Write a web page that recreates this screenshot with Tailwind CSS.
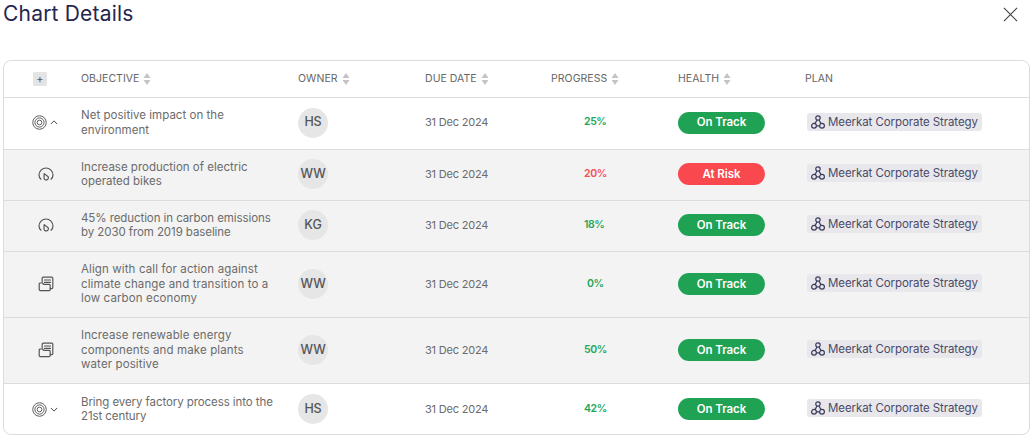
<!doctype html>
<html><head><meta charset="utf-8"><script src="https://cdn.jsdelivr.net/npm/@tailwindcss/browser@4"></script></head>
<body class="bg-white w-[1032px] h-[437px] overflow-hidden font-['Inter','Noto_Sans',sans-serif] text-[#6b6b6b]">
<svg width="0" height="0" class="absolute">
<defs>
<symbol id="target" viewBox="0 0 16 16"><g fill="none" stroke="#555" stroke-width="1"><circle cx="8" cy="8" r="7.2"/><circle cx="8" cy="8" r="4.9"/><circle cx="8" cy="8" r="2.5"/></g></symbol>
<symbol id="gauge" viewBox="0 0 16 16"><g fill="none" stroke="#555" stroke-width="1.2" stroke-linecap="round" stroke-linejoin="round"><path d="M3 13.2C1.6 12 1 10.5 1 9a7 7 0 0 1 14 0c0 1.5-.6 3-2 4.2"/><path d="M6.2 7.6l4 3.2a2.2 2.2 0 1 1-4.2.9z"/></g></symbol>
<symbol id="doc" viewBox="0 0 16 16"><g fill="none" stroke="#555" stroke-width="1.2" stroke-linejoin="round" stroke-linecap="round"><path d="M4.2 6V2.2a1 1 0 0 1 1-1h8.6a1 1 0 0 1 1 1v9.4a1 1 0 0 1-1 1h-1.6"/><path d="M6.5 4h6M6.5 6.4h6"/><path d="M1.2 8a1 1 0 0 1 1-1h2.3l1.2 1.4h5.5a1 1 0 0 1 1 1v4.2a1 1 0 0 1-1 1H2.2a1 1 0 0 1-1-1z"/></g></symbol>
<symbol id="plan" viewBox="0 0 14 14"><g fill="none" stroke="#3a3a5c" stroke-width="1.2"><circle cx="7" cy="3" r="2.2"/><circle cx="3" cy="10.8" r="2.4"/><circle cx="11" cy="10.8" r="2.4"/><path d="M6 5L4 8.6M8 5l2 3.6M5.4 10.8h3.2"/></g></symbol>
<symbol id="sort" viewBox="0 0 8 14"><path d="M4 1L7.5 6H.5z" fill="#c4c4c8"/><path d="M4 13L.5 8h7z" fill="#c4c4c8"/></symbol>
</defs></svg>

<div class="flex justify-between h-[60px] pl-[3px] pr-[14px]">
  <h1 class="text-[21px] leading-[28px] tracking-[0.2px] text-[#25254f] font-normal">Chart Details</h1>
  <svg class="w-[15px] h-[15px] mt-[7px]" viewBox="0 0 16 16"><path d="M1 1l14 14M15 1L1 15" stroke="#444" stroke-width="1.2" fill="none"/></svg>
</div>

<div class="mx-[3px] w-[1027px] h-[375px] border border-[#dcdcdc] rounded-[8px] overflow-hidden text-[11.5px] leading-[14.5px] tracking-[-0.08px]">
  <div class="grid grid-cols-[77px_217px_127px_126px_127px_127px_1fr] items-center h-[37px] border-b border-[#dcdcdc] text-[10.5px] text-[#666] tracking-[0.05px]">
    <div class="pl-[29px]"><span class="w-[14px] h-[14px] bg-[#e4e4e4] flex items-center justify-center text-[11px] leading-none text-[#555] rounded-[1px]">+</span></div>
    <div class="flex items-center gap-[4px]">OBJECTIVE <svg class="w-[8px] h-[14px]"><use href="#sort"/></svg></div>
    <div class="flex items-center gap-[4px]">OWNER <svg class="w-[8px] h-[14px]"><use href="#sort"/></svg></div>
    <div class="flex items-center gap-[4px]">DUE DATE <svg class="w-[8px] h-[14px]"><use href="#sort"/></svg></div>
    <div class="flex items-center gap-[4px]">PROGRESS <svg class="w-[8px] h-[14px]"><use href="#sort"/></svg></div>
    <div class="flex items-center gap-[4px]">HEALTH <svg class="w-[8px] h-[14px]"><use href="#sort"/></svg></div>
    <div>PLAN</div>
  </div>

  <div class="grid grid-cols-[77px_217px_127px_126px_127px_127px_1fr] items-center h-[52px] pb-[2px] border-b border-[#dcdcdc]">
    <div class="flex items-center justify-center gap-[3px] pl-[4px]"><svg class="w-[15px] h-[15px]"><use href="#target"/></svg><svg class="w-[8px] h-[5px]" viewBox="0 0 10 6"><path d="M1 5l4-4 4 4" fill="none" stroke="#444" stroke-width="1.2"/></svg></div>
    <div class="pr-[20px] tracking-[0.03px]">Net positive impact on the environment</div>
    <div><span class="w-[30px] h-[30px] rounded-full bg-[#e6e6e6] flex items-center justify-center text-[12.5px] font-medium text-[#555]">HS</span></div>
    <div class="text-[11px] tracking-[-0.2px]">31 Dec 2024</div>
    <div class="pl-[33px] text-[10.5px] tracking-[-0.4px] font-semibold text-[#22a75a]">25%</div>
    <div><span class="flex items-center justify-center w-[87px] h-[22px] rounded-full bg-[#1fa254] text-white font-semibold">On Track</span></div>
    <div><span class="inline-flex items-center gap-[3px] h-[18px] pl-[4px] pr-[4px] ml-[2px] bg-[#e8e8ec] rounded-[3px] text-[#4a4a68] whitespace-nowrap"><svg class="w-[14px] h-[14px]"><use href="#plan"/></svg>Meerkat Corporate Strategy</span></div>
  </div>

  <div class="grid grid-cols-[77px_217px_127px_126px_127px_127px_1fr] items-center h-[51px] pb-[2px] border-b border-[#dcdcdc] bg-[#f3f3f3]">
    <div class="flex items-center justify-center pl-[7px]"><svg class="w-[16px] h-[16px]"><use href="#gauge"/></svg></div>
    <div class="pr-[40px] tracking-[0px]">Increase production of electric operated bikes</div>
    <div><span class="w-[30px] h-[30px] rounded-full bg-[#e6e6e6] flex items-center justify-center text-[12.5px] font-medium text-[#555]">WW</span></div>
    <div class="text-[11px] tracking-[-0.2px]">31 Dec 2024</div>
    <div class="pl-[33px] text-[10.5px] tracking-[-0.4px] font-semibold text-[#f25055]">20%</div>
    <div><span class="flex items-center justify-center w-[87px] h-[22px] rounded-full bg-[#f9484e] text-white font-semibold">At Risk</span></div>
    <div><span class="inline-flex items-center gap-[3px] h-[18px] pl-[4px] pr-[4px] ml-[2px] bg-[#e8e8ec] rounded-[3px] text-[#4a4a68] whitespace-nowrap"><svg class="w-[14px] h-[14px]"><use href="#plan"/></svg>Meerkat Corporate Strategy</span></div>
  </div>

  <div class="grid grid-cols-[77px_217px_127px_126px_127px_127px_1fr] items-center h-[51px] pb-[2px] border-b border-[#dcdcdc] bg-[#f3f3f3]">
    <div class="flex items-center justify-center pl-[7px]"><svg class="w-[16px] h-[16px]"><use href="#gauge"/></svg></div>
    <div class="pr-[20px]">45% reduction in carbon emissions by 2030 from 2019 baseline</div>
    <div><span class="w-[30px] h-[30px] rounded-full bg-[#e6e6e6] flex items-center justify-center text-[12.5px] font-medium text-[#555]">KG</span></div>
    <div class="text-[11px] tracking-[-0.2px]">31 Dec 2024</div>
    <div class="pl-[33px] text-[10.5px] tracking-[-0.4px] font-semibold text-[#22a75a]">18%</div>
    <div><span class="flex items-center justify-center w-[87px] h-[22px] rounded-full bg-[#1fa254] text-white font-semibold">On Track</span></div>
    <div><span class="inline-flex items-center gap-[3px] h-[18px] pl-[4px] pr-[4px] ml-[2px] bg-[#e8e8ec] rounded-[3px] text-[#4a4a68] whitespace-nowrap"><svg class="w-[14px] h-[14px]"><use href="#plan"/></svg>Meerkat Corporate Strategy</span></div>
  </div>

  <div class="grid grid-cols-[77px_217px_127px_126px_127px_127px_1fr] items-center h-[66px] pb-[1px] border-b border-[#dcdcdc] bg-[#f3f3f3]">
    <div class="flex items-center justify-center pl-[7px]"><svg class="w-[16px] h-[16px]"><use href="#doc"/></svg></div>
    <div class="pr-[20px] tracking-[0.12px]">Align with call for action against climate change and transition to a low carbon economy</div>
    <div><span class="w-[30px] h-[30px] rounded-full bg-[#e6e6e6] flex items-center justify-center text-[12.5px] font-medium text-[#555]">WW</span></div>
    <div class="text-[11px] tracking-[-0.2px]">31 Dec 2024</div>
    <div class="pl-[36px] text-[10.5px] tracking-[-0.4px] font-semibold text-[#22a75a]">0%</div>
    <div><span class="flex items-center justify-center w-[87px] h-[22px] rounded-full bg-[#1fa254] text-white font-semibold">On Track</span></div>
    <div><span class="inline-flex items-center gap-[3px] h-[18px] pl-[4px] pr-[4px] ml-[2px] bg-[#e8e8ec] rounded-[3px] text-[#4a4a68] whitespace-nowrap"><svg class="w-[14px] h-[14px]"><use href="#plan"/></svg>Meerkat Corporate Strategy</span></div>
  </div>

  <div class="grid grid-cols-[77px_217px_127px_126px_127px_127px_1fr] items-center h-[66px] pb-[1px] border-b border-[#dcdcdc] bg-[#f3f3f3]">
    <div class="flex items-center justify-center pl-[7px]"><svg class="w-[16px] h-[16px]"><use href="#doc"/></svg></div>
    <div class="pr-[30px] tracking-[0.12px]">Increase renewable energy components and make plants water positive</div>
    <div><span class="w-[30px] h-[30px] rounded-full bg-[#e6e6e6] flex items-center justify-center text-[12.5px] font-medium text-[#555]">WW</span></div>
    <div class="text-[11px] tracking-[-0.2px]">31 Dec 2024</div>
    <div class="pl-[33px] text-[10.5px] tracking-[-0.4px] font-semibold text-[#22a75a]">50%</div>
    <div><span class="flex items-center justify-center w-[87px] h-[22px] rounded-full bg-[#1fa254] text-white font-semibold">On Track</span></div>
    <div><span class="inline-flex items-center gap-[3px] h-[18px] pl-[4px] pr-[4px] ml-[2px] bg-[#e8e8ec] rounded-[3px] text-[#4a4a68] whitespace-nowrap"><svg class="w-[14px] h-[14px]"><use href="#plan"/></svg>Meerkat Corporate Strategy</span></div>
  </div>

  <div class="grid grid-cols-[77px_217px_127px_126px_127px_127px_1fr] items-center h-[50px]">
    <div class="flex items-center justify-center gap-[3px] pl-[4px]"><svg class="w-[15px] h-[15px]"><use href="#target"/></svg><svg class="w-[8px] h-[5px]" viewBox="0 0 10 6"><path d="M1 1l4 4 4-4" fill="none" stroke="#444" stroke-width="1.2"/></svg></div>
    <div class="pr-[10px]">Bring every factory process into the 21st century</div>
    <div><span class="w-[30px] h-[30px] rounded-full bg-[#e6e6e6] flex items-center justify-center text-[12.5px] font-medium text-[#555]">HS</span></div>
    <div class="text-[11px] tracking-[-0.2px]">31 Dec 2024</div>
    <div class="pl-[33px] text-[10.5px] tracking-[-0.4px] font-semibold text-[#22a75a]">42%</div>
    <div><span class="flex items-center justify-center w-[87px] h-[22px] rounded-full bg-[#1fa254] text-white font-semibold">On Track</span></div>
    <div><span class="inline-flex items-center gap-[3px] h-[18px] pl-[4px] pr-[4px] ml-[2px] bg-[#e8e8ec] rounded-[3px] text-[#4a4a68] whitespace-nowrap"><svg class="w-[14px] h-[14px]"><use href="#plan"/></svg>Meerkat Corporate Strategy</span></div>
  </div>
</div>
</body></html>
